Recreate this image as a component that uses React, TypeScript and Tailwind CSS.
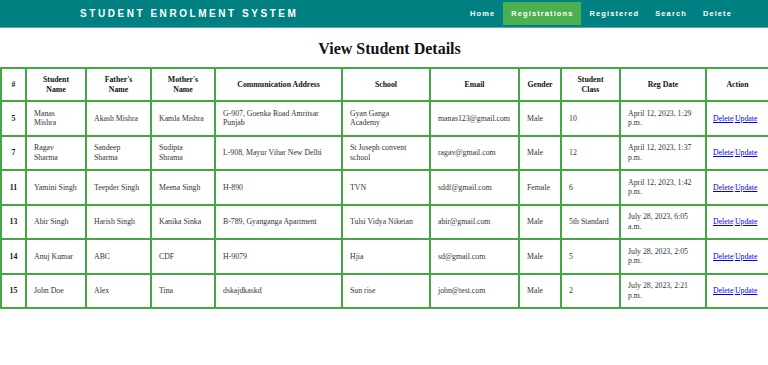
import React from "react";

interface Student {
  id: number;
  name: string;
  father: string;
  mother: string;
  address: string;
  school: string;
  email: string;
  gender: string;
  studentClass: string;
  regDate: string;
}

// line breaks follow the wrapping of the original page
const students: Student[] = [
  { id: 5, name: "Manas\nMishra", father: "Akash Mishra", mother: "Kamla Mishra", address: "G-907, Goenka Road Amritsar\nPunjab", school: "Gyan Ganga\nAcademy", email: "manas123@gmail.com", gender: "Male", studentClass: "10", regDate: "April 12, 2023, 1:29\np.m." },
  { id: 7, name: "Ragav\nSharma", father: "Sandeep\nSharma", mother: "Sudipta\nShrama", address: "L-908, Mayur Vihar New Delhi", school: "St Joseph convent\nschool", email: "ragav@gmail.com", gender: "Male", studentClass: "12", regDate: "April 12, 2023, 1:37\np.m." },
  { id: 11, name: "Yamini Singh", father: "Teepder Singh", mother: "Meena Singh", address: "H-890", school: "TVN", email: "sddf@gmail.com", gender: "Female", studentClass: "6", regDate: "April 12, 2023, 1:42\np.m." },
  { id: 13, name: "Abir Singh", father: "Harish Singh", mother: "Kanika Sinka", address: "B-789, Gyanganga Apartment", school: "Tulsi Vidya Niketan", email: "abir@gmail.com", gender: "Male", studentClass: "5th Standard", regDate: "July 28, 2023, 6:05\na.m." },
  { id: 14, name: "Anuj Kumar", father: "ABC", mother: "CDF", address: "H-9079", school: "Hjia", email: "sd@gmail.com", gender: "Male", studentClass: "5", regDate: "July 28, 2023, 2:05\np.m." },
  { id: 15, name: "John Doe", father: "Alex", mother: "Tina", address: "dskajdkaskd", school: "Sun rise", email: "john@test.com", gender: "Male", studentClass: "2", regDate: "July 28, 2023, 2:21\np.m." },
];

const navItems = ["Home", "Registrations", "Registered", "Search", "Delete"];

const headers = [
  "#",
  "Student\nName",
  "Father's\nName",
  "Mother's\nName",
  "Communication Address",
  "School",
  "Email",
  "Gender",
  "Student\nClass",
  "Reg Date",
  "Action",
];

const colWidths = [25, 60, 65, 64, 127, 88, 89, 42, 59, 86, 63];

const cell = "border-2 border-[#43a843] px-[7px] py-[4px] text-[#333] whitespace-pre";

export default function App() {
  return (
    <div className="min-h-screen bg-white">
      {/* Top Navbar */}
      <nav className="h-[28px] bg-[#008080] flex items-center justify-between pl-[80px] pr-[28px] font-['Liberation_Sans',Arial,sans-serif] border-b border-[#5fa8a8]">
        <span className="text-white font-bold text-[10px] tracking-[2.55px]">
          STUDENT ENROLMENT SYSTEM
        </span>
        <ul className="flex items-center h-full">
          {navItems.map((item) => (
            <li
              key={item}
              className={`h-[23px] flex items-center pt-[1px] px-[8px] text-white font-bold text-[7.5px] tracking-[1.1px] ${
                item === "Registrations" ? "bg-[#4CAF50]" : ""
              }`}
            >
              {item}
            </li>
          ))}
        </ul>
      </nav>

      {/* Page Title */}
      <h1 className="text-center font-bold text-[16px] leading-none pt-[13px] pb-[10px] pl-[11px] text-[#111] font-['Liberation_Serif','Times_New_Roman',serif]">
        View Student Details
      </h1>

      {/* Students Table */}
      <table className="w-full table-fixed border-collapse border-2 border-[#43a843] font-['Liberation_Serif','Times_New_Roman',serif] text-[7.8px] leading-[1.2]">
        <colgroup>
          {colWidths.map((w, i) => (
            <col key={i} style={{ width: w }} />
          ))}
        </colgroup>
        <thead>
          <tr className="h-[33px]">
            {headers.map((h) => (
              <th
                key={h}
                className="border-2 border-[#43a843] px-[4px] py-[4px] text-center font-bold text-[#111] whitespace-pre"
              >
                {h}
              </th>
            ))}
          </tr>
        </thead>
        <tbody>
          {students.map((s) => (
            <tr key={s.id} className="h-[34.5px]">
              <td className="border-2 border-[#43a843] text-center font-bold text-[#111]">{s.id}</td>
              <td className={cell}>{s.name}</td>
              <td className={cell}>{s.father}</td>
              <td className={cell}>{s.mother}</td>
              <td className={cell}>{s.address}</td>
              <td className={cell}>{s.school}</td>
              <td className={cell}>{s.email}</td>
              <td className={cell}>{s.gender}</td>
              <td className={cell}>{s.studentClass}</td>
              <td className={cell}>{s.regDate}</td>
              <td className="border-2 border-[#43a843] px-[6px] py-[4px] whitespace-nowrap">
                <a href="#" className="text-[#0000ee] underline">Delete</a>
                <span className="text-[#bbb]">|</span>
                <a href="#" className="text-[#0000ee] underline">Update</a>
              </td>
            </tr>
          ))}
        </tbody>
      </table>
    </div>
  );
}
